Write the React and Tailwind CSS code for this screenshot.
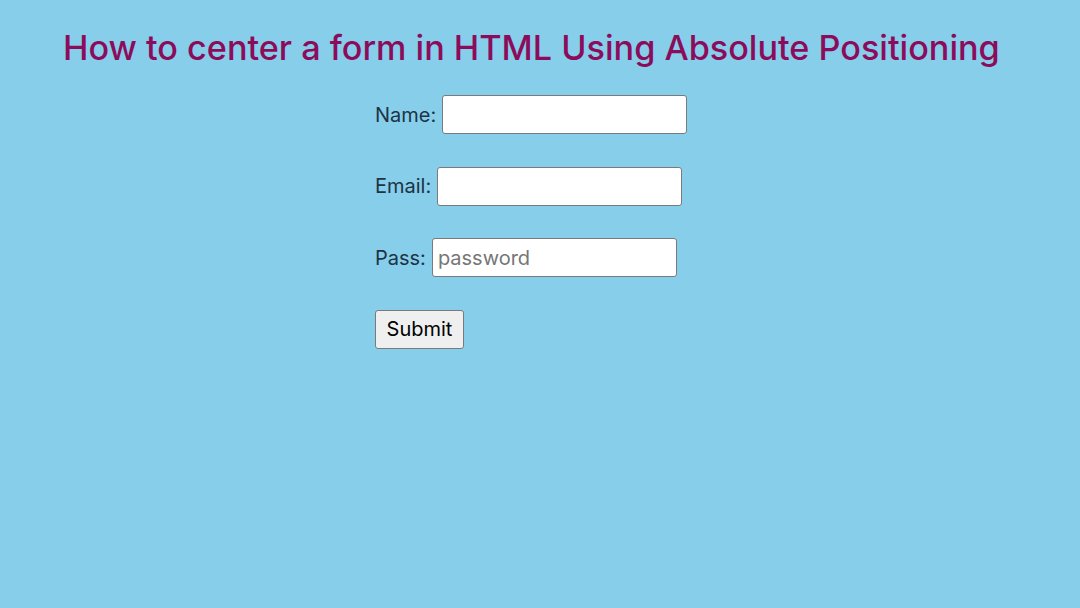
export default function App() {
  return (
    <div className="w-[1080px] h-[608px] bg-[#87ceeb] overflow-hidden" style={{ fontFamily: "Inter, 'Liberation Sans', sans-serif" }}>
      <h1 className="pl-[63px] pt-[26px] text-[34.2px] leading-[44px] font-medium text-[#8c0c5c] whitespace-nowrap">
        How to center a form in HTML Using Absolute Positioning
      </h1>
      <form className="ml-[375px] mt-[25px] flex flex-col gap-[32.6px]">
        <div className="flex items-center h-[39px]">
          <label className="text-[20px] text-[#1c3445] mr-[6px]">Name:</label>
          <input type="text" className="w-[245px] h-[39px] bg-white border border-[#7a7a7a] rounded-[3px] px-[5px] text-[20px]" />
        </div>
        <div className="flex items-center h-[39px]">
          <label className="text-[20px] text-[#1c3445] mr-[6px]">Email:</label>
          <input type="text" className="w-[245px] h-[39px] bg-white border border-[#7a7a7a] rounded-[3px] px-[5px] text-[20px]" />
        </div>
        <div className="flex items-center h-[39px]">
          <label className="text-[20px] text-[#1c3445] mr-[6px]">Pass:</label>
          <input type="password" placeholder="password" className="w-[245px] h-[39px] bg-white border border-[#7a7a7a] rounded-[3px] px-[5px] text-[20px] placeholder:text-[#767676]" />
        </div>
        <div className="flex">
          <button type="button" className="w-[89px] h-[39px] bg-[#efefef] border border-[#7a7a7a] rounded-[3px] text-[20px] text-black">Submit</button>
        </div>
      </form>
    </div>
  );
}
